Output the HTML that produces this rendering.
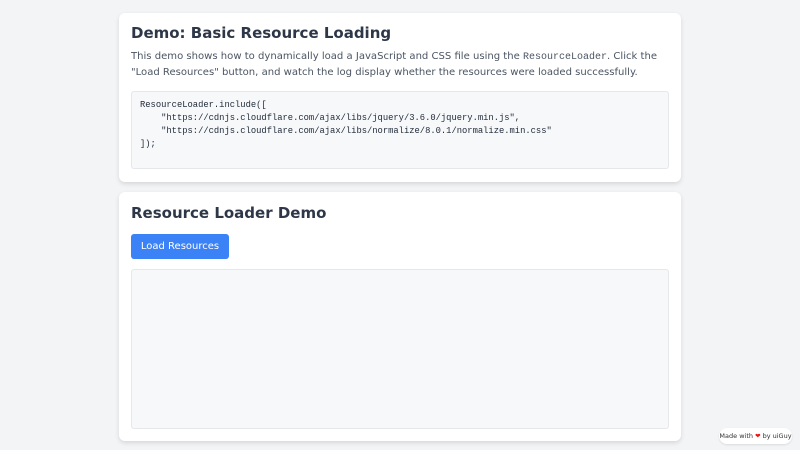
<!DOCTYPE html>
<html><head><style>
body{margin:0;background:#f3f4f6;font-family:"DejaVu Sans","Liberation Sans",sans-serif;color:#374151;width:800px;height:450px;overflow:hidden;position:relative}
.card{position:absolute;left:119px;width:538px;background:#fff;border-radius:6px;box-shadow:0 2px 5px rgba(0,0,0,.12);padding:0 12px}
h1{margin:0;font-size:15px;font-weight:bold;color:#2d3748;position:absolute;left:12px}
p{position:absolute;left:12px;top:36px;margin:0;font-size:10.05px;line-height:15px;color:#4b5563;width:540px}
code,pre{font-family:"Liberation Mono",monospace}
p code{font-size:10px}
pre{position:absolute;left:12px;top:78px;width:520px;height:62px;margin:0;padding:7px 8px;background:#f7f8fa;border:1px solid #e5e7eb;border-radius:3px;font-size:8.8px;line-height:13px;color:#1f2937}
.btn{position:absolute;left:12px;top:42px;width:98px;height:25px;background:#3b82f6;color:#fff;border-radius:3px;font-size:10px;line-height:25px;text-align:center}
.log{position:absolute;left:12px;top:77px;width:536px;height:158px;background:#f7f8fa;border:1px solid #e5e7eb;border-radius:3px}
.badge{position:absolute;left:719px;top:428px;width:73px;height:16px;background:#fff;border-radius:8px;font-size:6.5px;line-height:16px;text-align:center;color:#333;box-shadow:0 1px 2px rgba(0,0,0,.1)}
</style></head><body>
<div class="card" style="top:13px;height:169px">
<h1 style="top:11px">Demo: Basic Resource Loading</h1>
<p>This demo shows how to dynamically load a JavaScript and CSS file using the <code>ResourceLoader</code>. Click the "Load Resources" button, and watch the log display whether the resources were loaded successfully.</p>
<pre>ResourceLoader.include([
    "https://cdnjs.cloudflare.com/ajax/libs/jquery/3.6.0/jquery.min.js",
    "https://cdnjs.cloudflare.com/ajax/libs/normalize/8.0.1/normalize.min.css"
]);</pre>
</div>
<div class="card" style="top:192px;height:249px">
<h1 style="top:12px">Resource Loader Demo</h1>
<div class="btn">Load Resources</div>
<div class="log"></div>
</div>
<div class="badge">Made with <span style="color:#e11">&#10084;</span> by uiGuy</div>
</body></html>
